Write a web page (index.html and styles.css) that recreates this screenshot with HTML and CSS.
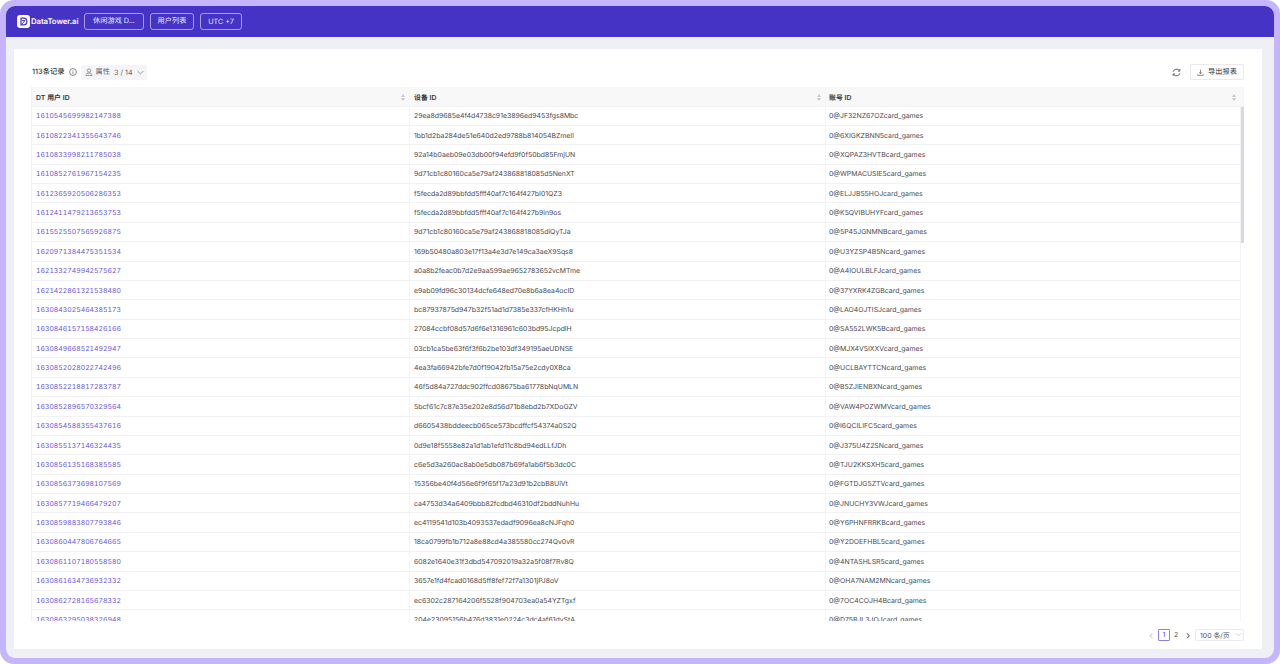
FILE: index.html
```html
<!DOCTYPE html>
<html lang="zh">
<head>
<meta charset="utf-8">
<title>用户列表</title>
<link rel="stylesheet" href="styles.css">
</head>
<body>
<div class="frame">
  <div class="window">
    <header class="topbar">
      <div class="logo">
        <svg class="logo-mark" viewBox="0 0 13 13" width="13" height="13"><rect width="13" height="13" rx="3.2" fill="#fff"/><path d="M4 3.2h2.6a3.3 3.3 0 0 1 0 6.6H4z" fill="none" stroke="#4433c4" stroke-width="1.2"/><path d="M4.4 9.4 8 5.6H4.8" fill="none" stroke="#4433c4" stroke-width="1"/></svg>
        <span class="logo-text">DataTower.ai</span>
      </div>
      <span class="pill pill-game">休闲游戏 D...</span>
      <span class="pill pill-list">用户列表</span>
      <span class="pill pill-utc">UTC +7</span>
    </header>
    <main class="content">
      <section class="card">
        <div class="toolbar">
          <span class="count">113条记录</span>
          <svg class="info" viewBox="0 0 8 8" width="8" height="8"><circle cx="4" cy="4" r="3.4" fill="none" stroke="#555" stroke-width=".7"/><path d="M4 3.4v2.4M4 2.2v.6" stroke="#555" stroke-width=".7"/></svg>
          <span class="attrs">
            <svg viewBox="0 0 8 8" width="8" height="8"><circle cx="4" cy="2.5" r="1.7" fill="none" stroke="#777" stroke-width=".7"/><path d="M1 7.4c.2-1.8 1.4-2.5 3-2.5s2.800.7 3 2.500z" fill="none" stroke="#777" stroke-width=".7"/></svg>
            <span class="attrs-label">属性</span>
            <span class="attrs-num">3 / 14</span>
            <svg class="attrs-chev" viewBox="0 0 8 8" width="7" height="7"><path d="M.6 2.200 4 5.600 7.400 2.200" fill="none" stroke="#666" stroke-width=".7"/></svg>
          </span>
          <span class="spacer"></span>
          <svg class="refresh" viewBox="0 0 10 10" width="9" height="9"><path d="M1.200 4.200A3.900 3.900 0 0 1 8.200 3M8.800 5.800A3.900 3.900 0 0 1 1.800 7" fill="none" stroke="#444" stroke-width=".9"/><path d="M8.700 1.200v2.200H6.500M1.300 8.800V6.600h2.200" fill="none" stroke="#444" stroke-width=".9"/></svg>
          <span class="export">
            <svg viewBox="0 0 8 8" width="7" height="7"><path d="M4 .8v4.400M2.300 3.700 4 5.400l1.700-1.700M.8 6v1.200h6.400V6" fill="none" stroke="#444" stroke-width=".7"/></svg>
            导出报表
          </span>
        </div>
        <div class="table">
          <div class="row head">
            <div class="cell">DT 用户 ID<span class="sort"></span></div>
            <div class="cell">设备 ID<span class="sort"></span></div>
            <div class="cell">账号 ID<span class="sort"></span></div>
          </div>
          <div class="body" id="body">
            <div class="thumb"></div>
          </div>
        </div>
        <div class="pager">
          <span class="arrow dim">‹</span>
          <span class="page active">1</span>
          <span class="page">2</span>
          <span class="arrow">›</span>
          <span class="size">100 条/页
            <svg viewBox="0 0 8 8" width="7" height="7"><path d="M1 2.500 4 5.500 7 2.500" fill="none" stroke="#bbb" stroke-width=".7"/></svg>
          </span>
        </div>
      </section>
    </main>
  </div>
</div>
<script src="rows.js"></script>
</body>
</html>
```
FILE: styles.css
```css
* { box-sizing: border-box; }
html, body { margin: 0; height: 100%; background: #fff; overflow: hidden; }
body { font-family: Inter, "Noto Sans CJK SC", sans-serif; font-size: 6.900px; color: #3a3a3f; text-rendering: geometricPrecision; }
.frame { width: 1280px; height: 664px; padding: 6px; background: #c4b5fd; border-radius: 14px; }
.window { height: 652px; border-radius: 9px; overflow: hidden; display: flex; flex-direction: column; background: #eff0f5; }
.topbar { height: 30.500px; flex: none; background: #4433c4; display: flex; align-items: center; padding-left: 11px; color: #fff; }
.logo { display: flex; align-items: center; gap: 1px; width: 67px; }
.logo-mark { flex: none; }
.logo-text { font-size: 7.800px; font-weight: 600; letter-spacing: -.1px; }
.pill { height: 17px; display: flex; align-items: center; justify-content: center; border: 1px solid #a79fe4; border-radius: 3px; font-size: 7.200px; margin-right: 6px; color: #ece9fb; }
.pill-game { width: 60px; }
.pill-list { width: 44px; }
.pill-utc { width: 42px; }
.content { flex: 1; padding: 12.500px 12px 9px 8px; display: flex; min-height: 0; }
.card { flex: 1; background: #fff; padding: 15px 18px 0 17px; display: flex; flex-direction: column; min-width: 0; }
.toolbar { height: 16px; display: flex; align-items: center; margin-bottom: 6.500px; }
.count { font-weight: 500; color: #333; font-size: 7.300px; margin-left: 1px; white-space: nowrap; }
.info { margin: 0 4px 0 4px; flex: none; }
.attrs { height: 15px; width: 66px; flex: none; white-space: nowrap; background: #f5f5f7; border-radius: 2px; display: flex; align-items: center; padding-left: 4px; gap: 3px; color: #666; font-size: 7.200px; }
.attrs svg { flex: none; }
.attrs-num { margin-left: 1px; }
.attrs-chev { margin-left: 1px; }
.spacer { flex: 1; }
.refresh { margin-right: 9px; }
.export { width: 54px; height: 16px; border: 1px solid #e9e9ee; border-radius: 2px; display: flex; align-items: center; justify-content: center; gap: 4px; color: #333; font-size: 7.200px; white-space: nowrap; }
.table { position: relative; }
.row { display: grid; grid-template-columns: 378px 416px 1fr; height: 19.380px; border-bottom: 1px solid #f2f2f4; align-items: center; }
.cell { white-space: nowrap; overflow: hidden; position: relative; height: 100%; display: flex; align-items: center; color: #4a4a50; }
.cell:nth-child(1) { color: #6a5ad8; border-left: 1px solid #f2f2f4; padding-left: 4px; font-variant-numeric: tabular-nums; }
.cell:nth-child(2) { border-left: 1px solid #f4f4f6; padding-left: 4px; }
.cell:nth-child(3) { border-left: 1px solid #f4f4f6; padding-left: 3px; border-right: 1px solid #f4f4f6; }
.head { height: 20px; background: #f8f8f9; }
.head .cell:nth-child(n) { color: #333; font-weight: 600; padding-top: 1px; }
.sort { position: absolute; right: 4px; top: 7px; width: 4px; height: 7px; }
.head .cell:last-child .sort { right: 7px; }
.sort::before, .sort::after { content: ""; position: absolute; left: 0; border-left: 2px solid transparent; border-right: 2px solid transparent; }
.sort::before { top: 0; border-bottom: 3px solid #c8c8cc; }
.sort::after { bottom: 0; border-top: 3px solid #c8c8cc; }
.body { height: 514px; overflow: hidden; position: relative; padding-right: 3px; }
.thumb { position: absolute; right: 0; top: 0; width: 3px; height: 136px; background: #d9d9dd; }
.pager { height: 29px; display: flex; align-items: center; justify-content: flex-end; color: #555; }
.page { width: 12px; height: 12px; display: flex; align-items: center; justify-content: center; }
.active { color: #6250d8; border: 1px solid #8f80e8; border-radius: 1px; margin-left: 1px; }
.arrow { width: 12px; text-align: center; font-size: 11px; line-height: 10px; }
.arrow.dim { color: #c8c8cc; }
.page + .arrow { margin-right: 1px; }
.size { width: 49px; height: 12px; border: 1px solid #ececf0; border-radius: 1px; display: flex; align-items: center; padding-left: 4px; gap: 5px; color: #555; white-space: nowrap; }
```
FILE: rows.js
```js
var rows = [
["1610545699982147388","29ea8d9685e4f4d4738c91e3896ed9453fgs8Mbc","0@JF32NZ67OZcard_games"],
["1610822341355643746","1bb1d2ba284de51e640d2ed9788b814054BZmeIl","0@6XIGKZBNN5card_games"],
["1610833998211785038","92a14b0aeb09e03db00f94efd9f0f50bd85FmjUN","0@XQPAZ3HVTBcard_games"],
["1610852761967154235","9d71cb1c80160ca5e79af243868818085d5NenXT","0@WPMACUSIE5card_games"],
["1612365920506286353","f5fecda2d89bbfdd5fff40af7c164f427bI01QZ3","0@ELJJB55HOJcard_games"],
["1612411479213653753","f5fecda2d89bbfdd5fff40af7c164f427b9in9os","0@K5QVIBUHYFcard_games"],
["1615525507565926875","9d71cb1c80160ca5e79af243868818085diQyTJa","0@5P45JGNMNBcard_games"],
["1620971384475351534","169b50480a803e17f13a4e3d7e149ca3aeX9Sqs8","0@U3YZSP4B5Ncard_games"],
["1621332749942575627","a0a8b2feac0b7d2e9aa599ae9652783652vcMTme","0@A4IOULBLFJcard_games"],
["1621422861321538480","e9ab09fd96c30134dcfe648ed70e8b6a8ea4ocID","0@37YXRK4ZGBcard_games"],
["1630843025464385173","bc87937875d947b32f51ad1d7385e337cfHKHh1u","0@LAO4OJTISJcard_games"],
["1630846157158426166","27084ccbf08d57d6f6e1316961c603bd95JcpdlH","0@SA552LWK5Bcard_games"],
["1630849668521492947","03cb1ca5be63f6f3f6b2be103df349195aeUDNSE","0@MJX4V5IXXVcard_games"],
["1630852028022742496","4ea3fa66942bfe7d0f19042fb15a75e2cdy0XBca","0@UCLBAYTTCNcard_games"],
["1630852218817283787","46f5d84a727ddc902ffcd08675ba61778bNqUMLN","0@B5ZJIENBXNcard_games"],
["1630852896570329564","5bcf61c7c87e35e202e8d56d71b8ebd2b7XDoGZV","0@VAW4POZWMVcard_games"],
["1630854588355437616","d6605438bddeecb065ce573bcdffcf54374a0S2Q","0@I6QCILIFC5card_games"],
["1630855137146324435","0d9e18f5558e82a1d1ab1efd11c8bd94edLLfJDh","0@J375U4Z2SNcard_games"],
["1630856135168385585","c6e5d3a260ac8ab0e5db087b69fa1ab6f5b3dc0C","0@TJU2KKSXH5card_games"],
["1630856373698107569","15356be40f4d56e6f9f65f17a23d91b2cbB8UiVt","0@FGTDJG5ZTVcard_games"],
["1630857719466479207","ca4753d34a6409bbb82fcdbd46310df2bddNuhHu","0@JNUCHY3VWJcard_games"],
["1630859883807793846","ec4119541d103b4093537edadf9096ea8cNJFqh0","0@Y6PHNFRRKBcard_games"],
["1630860447806764665","18ca0799fb1b712a8e88cd4a385580cc274Qv0vR","0@Y2DOEFHBL5card_games"],
["1630861107180558580","6082e1640e31f3dbd547092019a32a5f08f7Rv8Q","0@4NTASHLSR5card_games"],
["1630861634736932332","3657e1fd4fcad0168d5ff8fef72f7a1301jPJ8oV","0@OHA7NAM2MNcard_games"],
["1630862728165678332","ec6302c287164206f5528f904703ea0a54YZTgxf","0@7OC4COJH4Bcard_games"],
["1630863295038326948","204e23095156b476d3831e0224c3dc4af61dyStA","0@D75RJL3JOJcard_games"]
];
var body = document.getElementById("body");
rows.forEach(function (r) {
  var row = document.createElement("div");
  row.className = "row";
  r.forEach(function (t) {
    var c = document.createElement("div");
    c.className = "cell";
    c.textContent = t;
    row.appendChild(c);
  });
  body.appendChild(row);
});
```
